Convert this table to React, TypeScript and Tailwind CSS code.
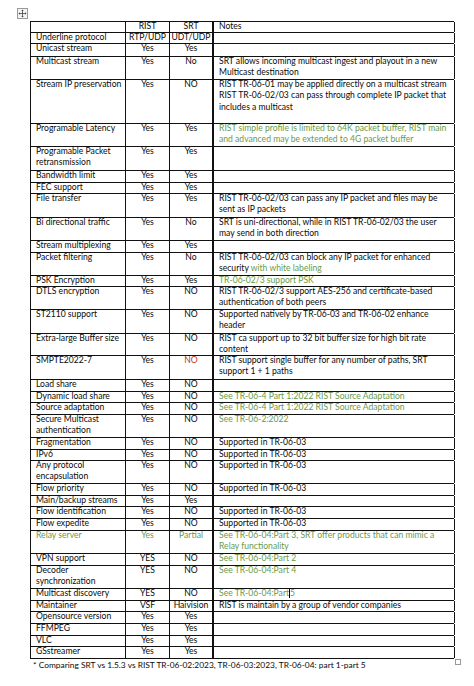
import React from "react";

type Row = {
  h: string;
  f: React.ReactNode[];
  r: string;
  s: React.ReactNode;
  n: React.ReactNode[];
  green?: boolean;
};

const G = "text-[#6b9a4a]";
const g = (t: string) => <span className={G}>{t}</span>;
const sup = "Supported in TR-06-03";

const rows: Row[] = [
  { h: "h-[11px]", f: [""], r: "RIST", s: "SRT", n: ["Notes"] },
  { h: "h-[11px]", f: ["Underline protocol"], r: "RTP/UDP", s: "UDT/UDP", n: [""] },
  { h: "h-[13px]", f: ["Unicast stream"], r: "Yes", s: "Yes", n: [""] },
  {
    h: "h-[23px]",
    f: ["Multicast stream"],
    r: "Yes",
    s: "No",
    n: ["SRT allows incoming multicast ingest and playout in a new", "Multicast destination"],
  },
  {
    h: "h-[44px]",
    f: ["Stream IP preservation"],
    r: "Yes",
    s: "NO",
    n: [
      "RIST TR-06-01 may be applied directly on a multicast stream",
      "RIST TR-06-02/03 can pass through complete IP packet that",
      "includes a multicast",
    ],
  },
  {
    h: "h-[23px]",
    f: ["Programable Latency"],
    r: "Yes",
    s: "Yes",
    n: [
      g("RIST simple profile is limited to 64K packet buffer, RIST main"),
      g("and advanced may be extended to 4G packet buffer"),
    ],
  },
  { h: "h-[24px]", f: ["Programable Packet", "retransmission"], r: "Yes", s: "Yes", n: [""] },
  { h: "h-[12px]", f: ["Bandwidth limit"], r: "Yes", s: "Yes", n: [""] },
  { h: "h-[11px]", f: ["FEC support"], r: "Yes", s: "Yes", n: [""] },
  {
    h: "h-[24px]",
    f: ["File transfer"],
    r: "Yes",
    s: "Yes",
    n: ["RIST TR-06-02/03 can pass any IP packet and files may be", "sent as IP packets"],
  },
  {
    h: "h-[23px]",
    f: ["Bi directional traffic"],
    r: "Yes",
    s: "No",
    n: ["SRT is uni-directional, while in RIST TR-06-02/03 the user", "may send in both direction"],
  },
  { h: "h-[12px]", f: ["Stream multiplexing"], r: "Yes", s: "Yes", n: [""] },
  {
    h: "h-[23px]",
    f: ["Packet filtering"],
    r: "Yes",
    s: "No",
    n: [
      "RIST TR-06-02/03 can block any IP packet for enhanced",
      <>
        security {g("with white labeling")}
      </>,
    ],
  },
  { h: "h-[11px]", f: ["PSK Encryption"], r: "Yes", s: "Yes", n: [g("TR-06-02/3 support PSK")] },
  {
    h: "h-[23px]",
    f: ["DTLS encryption"],
    r: "Yes",
    s: "NO",
    n: ["RIST TR-06-02/3 support AES-256 and certificate-based", "authentication of both peers"],
  },
  {
    h: "h-[24px]",
    f: ["ST2110 support"],
    r: "Yes",
    s: "NO",
    n: ["Supported natively by TR-06-03 and TR-06-02 enhance", "header"],
  },
  {
    h: "h-[22px]",
    f: ["Extra-large Buffer size"],
    r: "Yes",
    s: "NO",
    n: ["RIST ca support up to 32 bit buffer size for high bit rate", "content"],
  },
  {
    h: "h-[24px]",
    f: ["SMPTE2022-7"],
    r: "Yes",
    s: <span className="text-[#c0392b]">NO</span>,
    n: ["RIST support single buffer for any number of paths, SRT", "support 1 + 1 paths"],
  },
  { h: "h-[12px]", f: ["Load share"], r: "Yes", s: "NO", n: [""] },
  {
    h: "h-[11px]",
    f: ["Dynamic load share"],
    r: "Yes",
    s: "NO",
    n: [g("See TR-06-4 Part 1:2022 RIST Source Adaptation")],
  },
  {
    h: "h-[12px]",
    f: ["Source adaptation"],
    r: "Yes",
    s: "NO",
    n: [g("See TR-06-4 Part 1:2022 RIST Source Adaptation")],
  },
  {
    h: "h-[23px]",
    f: ["Secure Multicast", "authentication"],
    r: "Yes",
    s: "NO",
    n: [g("See TR-06-2:2022")],
  },
  { h: "h-[12px]", f: ["Fragmentation"], r: "Yes", s: "NO", n: [sup] },
  { h: "h-[11px]", f: ["IPv6"], r: "Yes", s: "NO", n: [sup] },
  { h: "h-[23px]", f: ["Any protocol", "encapsulation"], r: "Yes", s: "NO", n: [sup] },
  { h: "h-[12px]", f: ["Flow priority"], r: "Yes", s: "NO", n: [sup] },
  { h: "h-[11px]", f: ["Main/backup streams"], r: "Yes", s: "Yes", n: [""] },
  { h: "h-[12px]", f: ["Flow identification"], r: "Yes", s: "NO", n: [sup] },
  { h: "h-[12px]", f: ["Flow expedite"], r: "Yes", s: "NO", n: [sup] },
  {
    h: "h-[23px]",
    f: ["Relay server"],
    r: "Yes",
    s: "Partial",
    n: ["See TR-06-04:Part 3, SRT offer products that can mimic a", "Relay functionality"],
    green: true,
  },
  { h: "h-[12px]", f: ["VPN support"], r: "YES", s: "NO", n: [g("See TR-06-04:Part 2")] },
  {
    h: "h-[23px]",
    f: ["Decoder", "synchronization"],
    r: "YES",
    s: "NO",
    n: [g("See TR-06-04:Part 4")],
  },
  {
    h: "h-[12px]",
    f: ["Multicast discovery"],
    r: "YES",
    s: "NO",
    n: [
      <span className={G}>
        See TR-06-04:Part
        <span className="inline-block w-px h-[10px] bg-black align-[-2px]" />5
      </span>,
    ],
  },
  {
    h: "h-[11px]",
    f: ["Maintainer"],
    r: "VSF",
    s: "Haivision",
    n: ["RIST is maintain by a group of vendor companies"],
  },
  { h: "h-[12px]", f: ["Opensource version"], r: "Yes", s: "Yes", n: [""] },
  { h: "h-[12px]", f: ["FFMPEG"], r: "Yes", s: "Yes", n: [""] },
  { h: "h-[11px]", f: ["VLC"], r: "Yes", s: "Yes", n: [""] },
  { h: "h-[12px]", f: ["GSstreamer"], r: "Yes", s: "Yes", n: [""] },
];

function MoveHandle() {
  return (
    <svg width="11" height="11" viewBox="0 0 11 11" className="block">
      <rect x="0.5" y="0.5" width="10" height="10" fill="#f4f4f4" stroke="#9a9a9a" />
      <g stroke="#444" strokeWidth="0.8" fill="none">
        <line x1="5.5" y1="2" x2="5.5" y2="9" />
        <line x1="2" y1="5.5" x2="9" y2="5.5" />
      </g>
      <g fill="#444">
        <polygon points="5.5,1.5 4.3,3 6.7,3" />
        <polygon points="5.5,9.5 4.3,8 6.7,8" />
        <polygon points="1.5,5.5 3,4.3 3,6.7" />
        <polygon points="9.5,5.5 8,4.3 8,6.7" />
      </g>
    </svg>
  );
}

export default function App() {
  return (
    <div
      className="relative w-[474px] h-[686px] bg-white text-[#0a0a0a] overflow-hidden"
      style={{ fontFamily: "Lato, 'Open Sans', sans-serif" }}
    >
      <div className="absolute left-[17px] top-[8px]">
        <MoveHandle />
      </div>
      <div className="pt-[21px] pl-[30px]">
        <div className="w-[424px] border-t border-l border-[#111] text-[8.6px] leading-[11.3px]">
          {rows.map((row, i) => (
            <div
              key={i}
              className={`grid grid-cols-[95px_44px_44px_241px] border-b border-[#111] ${row.h} ${
                row.green ? G : ""
              }`}
            >
              <div className="border-r border-[#111] pl-[5px] overflow-hidden">
                <div className="-mt-px">
                  {row.f.map((t, j) => (
                    <div key={j} className="whitespace-nowrap">
                      {t}
                    </div>
                  ))}
                </div>
              </div>
              <div className="border-r border-[#111] text-center whitespace-nowrap">
                <div className="-mt-px">{row.r}</div>
              </div>
              <div className="border-r-2 border-[#111] text-center whitespace-nowrap">
                <div className="-mt-px">{row.s}</div>
              </div>
              <div className="border-r border-[#111] pl-[5px] overflow-hidden">
                <div className="-mt-px">
                  {row.n.map((t, j) => (
                    <div key={j} className="whitespace-nowrap">
                      {t}
                    </div>
                  ))}
                </div>
              </div>
            </div>
          ))}
        </div>
        <div className="flex">
          <div className="pl-[3px] pt-[1px] text-[8.4px] leading-[11.5px] whitespace-nowrap">
            * Comparing SRT vs 1.5.3 vs RIST TR-06-02:2023, TR-06-03:2023, TR-06-04: part 1-part 5
          </div>
        </div>
      </div>
      <div className="absolute left-[455px] top-[659px] w-[6px] h-[6px] border border-[#999] bg-white" />
    </div>
  );
}
